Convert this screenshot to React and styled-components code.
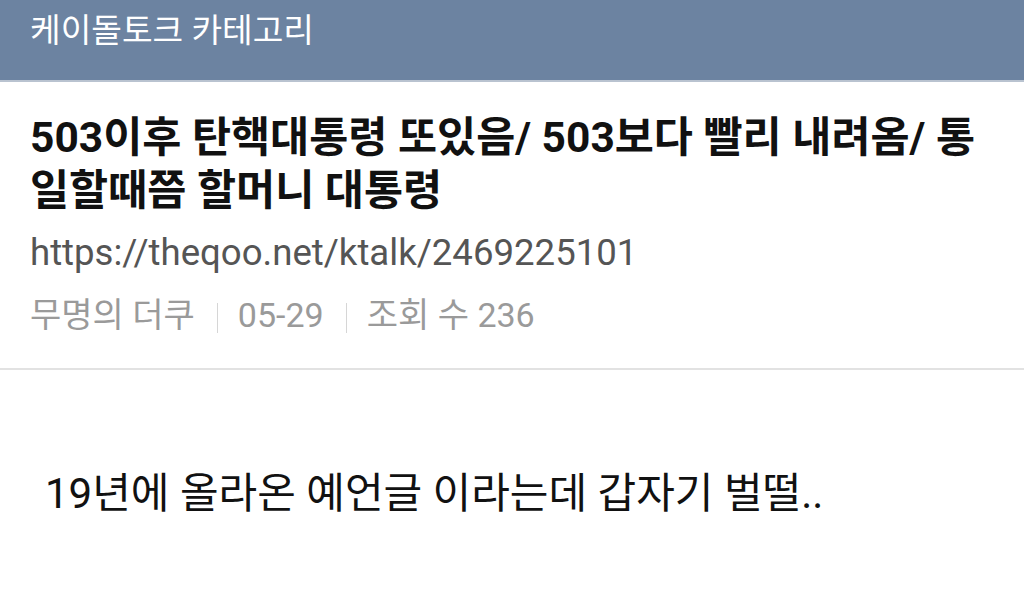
import React from 'react';
import styled, { createGlobalStyle } from 'styled-components';

const GlobalStyle = createGlobalStyle`
  html, body {
    margin: 0;
    padding: 0;
    background: #fff;
  }
  body {
    font-family: Roboto, "Noto Sans CJK KR", sans-serif;
  }
`;

const meta = ['무명의 더쿠', '05-29', '조회 수 236'];

export default function App() {
	return (
		<Page>
			<GlobalStyle />
			<Header>케이돌토크 카테고리</Header>
			<PostHead>
				<Title>503이후 탄핵대통령 또있음/ 503보다 빨리 내려옴/ 통일할때쯤 할머니 대통령</Title>
				<Url>https://theqoo.net/ktalk/2469225101</Url>
				<MetaRow>
					{meta.map((m, i) => (
						<React.Fragment key={m}>
							{i > 0 && <Sep />}
							<MetaItem>{m}</MetaItem>
						</React.Fragment>
					))}
				</MetaRow>
			</PostHead>
			<Body>19년에 올라온 예언글 이라는데 갑자기 벌떨..</Body>
		</Page>
	);
}

const Page = styled.div`
    width: 1024px;
    height: 601px;
    overflow: hidden;
    background: #fff;
`;

const Header = styled.div`
    box-sizing: border-box;
    height: 82px;
    padding: 10px 30px 0;
    background-color: #6c83a1;
    border-bottom: 2px solid #b9c3d0;
    color: #fff;
    font-size: 33.3px;
    line-height: 42px;
`;

const PostHead = styled.div`
    padding: 29px 30px 31px;
    border-bottom: 2px solid #e2e2e2;
`;

const Title = styled.h1`
    margin: 0;
    color: #111;
    font-size: 42.5px;
    font-weight: 700;
    line-height: 53px;
`;

const Url = styled.div`
    margin-top: 14px;
    color: #555;
    font-size: 36.6px;
    line-height: 44px;
`;

const MetaRow = styled.div`
    display: flex;
    align-items: center;
    margin-top: 18px;
    color: #9a9a9a;
    font-size: 34px;
    line-height: 44px;
`;

const MetaItem = styled.span``;

const Sep = styled.span`
    width: 1px;
    height: 30px;
    margin: 5px 20px 0 22px;
    background: #d6d6d6;
`;

const Body = styled.p`
    margin: 0;
    padding: 99px 45px 0;
    color: #111;
    font-size: 42px;
    line-height: 50px;
`;
